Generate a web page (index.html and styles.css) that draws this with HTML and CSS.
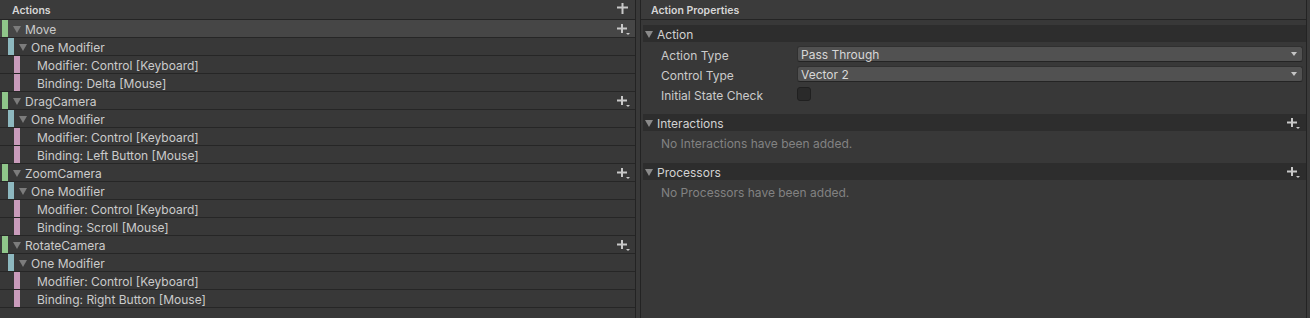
FILE: index.html
```html
<!DOCTYPE html>
<html lang="en">
<head>
    <meta charset="UTF-8">
    <meta name="viewport" content="width=device-width, initial-scale=1.0">
    <title>Input Actions</title>
    <link rel="stylesheet" href="styles.css">
</head>
<body>
    <div class="editor">
        <!-- 左侧动作列表 -->
        <section class="actions-pane">
            <div class="pane-header">
                <span class="pane-title">Actions</span>
                <span class="icon-plus">
                    <svg width="11" height="11" viewBox="0 0 11 11"><path d="M0 4.5h11M5.5 0v11" stroke="#c8c8c8" stroke-width="2"/></svg>
                </span>
            </div>
            <ul class="tree">
                <li class="row action selected"><i class="bar"></i><i class="fold"></i><span class="label">Move</span><span class="row-add"><svg width="14" height="12" viewBox="0 0 14 12"><path d="M0 4.5h10M5 0v9" stroke="#c8c8c8" stroke-width="2"/><path d="M9 9h4l-2 2z" fill="#c8c8c8"/></svg></span></li>
                <li class="row composite"><i class="bar"></i><i class="fold"></i><span class="label">One Modifier</span></li>
                <li class="row binding"><i class="bar"></i><i class="spacer"></i><span class="label">Modifier: Control [Keyboard]</span></li>
                <li class="row binding"><i class="bar"></i><i class="spacer"></i><span class="label">Binding: Delta [Mouse]</span></li>

                <li class="row action"><i class="bar"></i><i class="fold"></i><span class="label">DragCamera</span><span class="row-add"><svg width="14" height="12" viewBox="0 0 14 12"><path d="M0 4.5h10M5 0v9" stroke="#c8c8c8" stroke-width="2"/><path d="M9 9h4l-2 2z" fill="#c8c8c8"/></svg></span></li>
                <li class="row composite"><i class="bar"></i><i class="fold"></i><span class="label">One Modifier</span></li>
                <li class="row binding"><i class="bar"></i><i class="spacer"></i><span class="label">Modifier: Control [Keyboard]</span></li>
                <li class="row binding"><i class="bar"></i><i class="spacer"></i><span class="label">Binding: Left Button [Mouse]</span></li>

                <li class="row action"><i class="bar"></i><i class="fold"></i><span class="label">ZoomCamera</span><span class="row-add"><svg width="14" height="12" viewBox="0 0 14 12"><path d="M0 4.5h10M5 0v9" stroke="#c8c8c8" stroke-width="2"/><path d="M9 9h4l-2 2z" fill="#c8c8c8"/></svg></span></li>
                <li class="row composite"><i class="bar"></i><i class="fold"></i><span class="label">One Modifier</span></li>
                <li class="row binding"><i class="bar"></i><i class="spacer"></i><span class="label">Modifier: Control [Keyboard]</span></li>
                <li class="row binding"><i class="bar"></i><i class="spacer"></i><span class="label">Binding: Scroll [Mouse]</span></li>

                <li class="row action"><i class="bar"></i><i class="fold"></i><span class="label">RotateCamera</span><span class="row-add"><svg width="14" height="12" viewBox="0 0 14 12"><path d="M0 4.5h10M5 0v9" stroke="#c8c8c8" stroke-width="2"/><path d="M9 9h4l-2 2z" fill="#c8c8c8"/></svg></span></li>
                <li class="row composite"><i class="bar"></i><i class="fold"></i><span class="label">One Modifier</span></li>
                <li class="row binding"><i class="bar"></i><i class="spacer"></i><span class="label">Modifier: Control [Keyboard]</span></li>
                <li class="row binding"><i class="bar"></i><i class="spacer"></i><span class="label">Binding: Right Button [Mouse]</span></li>
            </ul>
        </section>

        <div class="splitter"></div>

        <!-- 右侧属性面板 -->
        <section class="props-pane">
            <div class="pane-header">
                <span class="pane-title">Action Properties</span>
            </div>

            <div class="section">
                <div class="foldout"><i class="fold"></i><span class="label">Action</span></div>
                <div class="section-body">
                    <div class="prop">
                        <span class="prop-label">Action Type</span>
                        <div class="dropdown"><span class="label">Pass Through</span><i class="caret"></i></div>
                    </div>
                    <div class="prop">
                        <span class="prop-label">Control Type</span>
                        <div class="dropdown"><span class="label">Vector 2</span><i class="caret"></i></div>
                    </div>
                    <div class="prop">
                        <span class="prop-label">Initial State Check</span>
                        <div class="checkbox"></div>
                    </div>
                </div>
            </div>

            <div class="section">
                <div class="foldout"><i class="fold"></i><span class="label">Interactions</span>
                    <span class="row-add"><svg width="14" height="12" viewBox="0 0 14 12"><path d="M0 4.5h10M5 0v9" stroke="#c8c8c8" stroke-width="2"/><path d="M9 9h4l-2 2z" fill="#c8c8c8"/></svg></span>
                </div>
                <div class="section-body">
                    <p class="empty">No Interactions have been added.</p>
                </div>
            </div>

            <div class="section">
                <div class="foldout"><i class="fold"></i><span class="label">Processors</span>
                    <span class="row-add"><svg width="14" height="12" viewBox="0 0 14 12"><path d="M0 4.5h10M5 0v9" stroke="#c8c8c8" stroke-width="2"/><path d="M9 9h4l-2 2z" fill="#c8c8c8"/></svg></span>
                </div>
                <div class="section-body">
                    <p class="empty">No Processors have been added.</p>
                </div>
            </div>
        </section>

        <div class="scroll-strip"></div>
    </div>
</body>
</html>
```

FILE: styles.css
```css
/* Unity 暗色主题 */
html, body {
    margin: 0;
    padding: 0;
    background-color: #383838;
}
body {
    font-family: Inter, "Noto Sans", "Liberation Sans", sans-serif;
    font-size: 12px;
    color: #cbcbcb;
}
.editor {
    display: flex;
    width: 1310px;
    height: 318px;
    overflow: hidden;
}
.actions-pane {
    width: 635px;
    border-right: 1px solid #232323;
    display: flex;
    flex-direction: column;
}
.splitter {
    width: 4px;
    border-right: 1px solid #232323;
    background-color: #393939;
}
.props-pane {
    width: 665px;
    border-right: 1px solid #232323;
}
.scroll-strip {
    width: 3px;
    background-color: #3a3a3a;
}

.pane-header {
    height: 19px;
    border-bottom: 1px solid #242424;
    background-color: #3b3b3b;
    display: flex;
    align-items: center;
}
.pane-title {
    font-size: 10.5px;
    font-weight: 600;
    color: #d6d6d6;
    padding-top: 1px;
}
.actions-pane .pane-title {
    padding-left: 12px;
}
.props-pane .pane-title {
    padding-left: 10px;
}
.icon-plus {
    margin-left: auto;
    margin-right: 7px;
    display: flex;
    margin-top: -2px;
}

/* 树形列表 */
.tree {
    list-style: none;
    margin: 0;
    padding: 0;
}
.row {
    height: 17px;
    border-bottom: 1px solid #262626;
    display: flex;
    align-items: center;
}
.row.selected {
    background-color: #464646;
}
.row .bar {
    align-self: stretch;
    width: 6px;
}
.action .bar {
    margin-left: 2px;
    background-color: #8fc68a;
}
.composite .bar {
    margin-left: 8px;
    background-color: #8db8bf;
}
.binding .bar {
    margin-left: 14px;
    background-color: #c99bbb;
}
.fold {
    width: 0;
    height: 0;
    border-left: 4px solid transparent;
    border-right: 4px solid transparent;
    border-top: 7px solid #7c7c7c;
    margin-left: 5px;
    margin-right: 4px;
    margin-top: 2px;
}
.spacer {
    width: 8px;
    margin-left: 5px;
    margin-right: 4px;
}
.label {
    white-space: nowrap;
    padding-top: 2px;
}
.row-add {
    margin-left: auto;
    margin-right: 4px;
    display: flex;
    margin-top: 2px;
}

/* 属性面板 */
.section {
    margin-top: 5px;
}
.section + .section {
    margin-top: 12px;
}
.foldout {
    height: 17px;
    margin-left: 2px;
    background-color: #2d2d2d;
    display: flex;
    align-items: center;
    color: #d2d2d2;
}
.foldout .fold {
    margin-left: 2px;
    margin-right: 4px;
    border-top-color: #8a8a8a;
}
.foldout .row-add {
    margin-right: 5px;
}
.section-body {
    padding-top: 4px;
    display: flex;
    flex-direction: column;
    gap: 4px;
}
.prop {
    height: 16px;
    display: flex;
    align-items: center;
    padding-left: 20px;
}
.prop-label {
    width: 136px;
    flex-shrink: 0;
    padding-top: 2px;
}
.dropdown {
    flex: 1;
    height: 16px;
    margin-right: 3px;
    box-sizing: border-box;
    background-color: #515151;
    border: 1px solid #303030;
    border-bottom-color: #242424;
    border-radius: 3px;
    display: flex;
    align-items: center;
    padding: 0 5px 0 3px;
    color: #d8d8d8;
}
.dropdown .label {
    padding-top: 1px;
}
.caret {
    margin-left: auto;
    width: 0;
    height: 0;
    border-left: 3.5px solid transparent;
    border-right: 3.5px solid transparent;
    border-top: 4px solid #c4c4c4;
}
.checkbox {
    width: 14px;
    height: 14px;
    box-sizing: border-box;
    background-color: #2a2a2a;
    border: 1px solid #202020;
    border-radius: 3px;
}
.empty {
    margin: 0;
    height: 16px;
    line-height: 18px;
    padding-left: 20px;
    color: #828282;
}
```
